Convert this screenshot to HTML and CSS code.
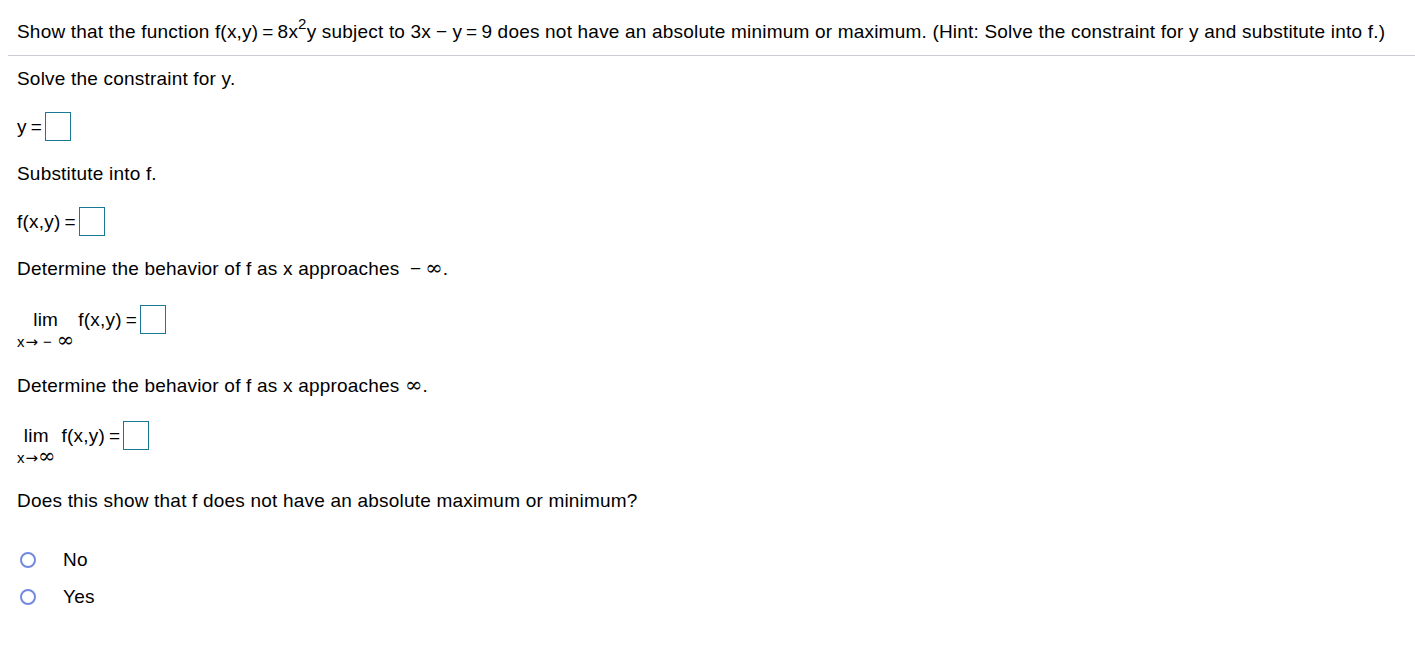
FILE: index.html
```html
<!DOCTYPE html>
<html>
<head>
<meta charset="utf-8">
<link rel="stylesheet" href="styles.css">
</head>
<body>
<div class="question">
  <p class="stem">Show that the function f(x,y)<span class="eq">=</span>8x<sup>2</sup>y subject to 3x<span class="op">−</span>y<span class="eq">=</span>9 does not have an absolute minimum or maximum. (Hint: Solve the constraint for y and substitute into f.)</p>
</div>
<div class="parts">
  <p class="line first">Solve the constraint for y.</p>
  <div class="ansrow r1"><span>y<span class="eq">=</span></span><span class="box"></span></div>
  <p class="line l2">Substitute into f.</p>
  <div class="ansrow r2"><span>f(x,y)<span class="eq">=</span></span><span class="box"></span></div>
  <p class="line l3">Determine the behavior of f as x approaches <span class="neg">−</span><span class="inf">∞</span>.</p>
  <div class="limrow r3">
    <div class="lim lim-neg"><span class="limw">lim</span><span class="under">x<span class="arr">→</span><span class="neg2">−</span><span class="inf2">∞</span></span></div>
    <span class="fx">f(x,y)<span class="eq">=</span></span><span class="box"></span>
  </div>
  <p class="line l4">Determine the behavior of f as x approaches <span class="inf">∞</span>.</p>
  <div class="limrow r4">
    <div class="lim lim-pos"><span class="limw">lim</span><span class="under">x<span class="arr">→</span><span class="inf2">∞</span></span></div>
    <span class="fx">f(x,y)<span class="eq">=</span></span><span class="box"></span>
  </div>
  <p class="line l5">Does this show that f does not have an absolute maximum or minimum?</p>
  <ul class="choices">
    <li><span class="radio"></span><span class="lbl">No</span></li>
    <li><span class="radio"></span><span class="lbl">Yes</span></li>
  </ul>
</div>
</body>
</html>
```
FILE: styles.css
```css
html, body {
  margin: 0;
  padding: 0;
  background: #fff;
}
body {
  font-family: "Liberation Sans", Arial, sans-serif;
  font-size: 19px;
  letter-spacing: 0.2px;
  color: #000;
  padding-left: 8px;
}
p { margin: 0; }
.question {
  border-bottom: 1px solid #c9ccd6;
  padding: 19px 0 10px 9px;
}
.stem { line-height: 26px; }
.stem sup {
  font-size: 15px;
  line-height: 0;
  position: relative;
  top: -2px;
  vertical-align: super;
}
.eq { margin: 0 4px; }
.op { margin: 0 5px; }
.parts { padding-left: 9px; }
.line { line-height: 22px; }
.first { margin-top: 12px; }
.ansrow {
  display: flex;
  align-items: center;
  margin-top: 22px;
}
.box {
  display: inline-block;
  width: 24px;
  height: 27px;
  border: 1px solid #1a7896;
}
.ansrow .eq, .limrow .eq { margin: 0 3px 0 4px; }
.l2 { margin-top: 22px; }
.r2 { margin-top: 22px; }
.l3 { margin-top: 22px; }
.neg { margin-left: 5px; margin-right: 4px; }
.inf { font-family: "DejaVu Serif", serif; font-size: 21px; letter-spacing: 0; line-height: 0; }
.limrow {
  display: flex;
  align-items: flex-start;
  margin-top: 25px;
  height: 50px;
}
.fx { line-height: 22px; margin-top: 4px; }
.lim {
  display: flex;
  flex-direction: column;
  align-items: center;
}
.limw { line-height: 22px; margin-top: 4px; }
.under {
  font-size: 15px;
  line-height: 16px;
  margin-top: 3px;
  letter-spacing: 0;
}
.arr { font-family: "DejaVu Sans", sans-serif; font-size: 15px; margin-left: 1px; }
.neg2 { margin: 0 5px; }
.inf2 { font-family: "DejaVu Serif", serif; font-size: 21px; line-height: 0; }
.lim-neg { margin-right: 4px; }
.lim-pos { margin-right: 6px; }
.l4 { margin-top: 20px; }
.r4 { margin-top: 24px; }
.l5 { margin-top: 19px; }
.choices {
  list-style: none;
  margin: 37px 0 0 0;
  padding: 0;
}
.choices li {
  display: flex;
  align-items: center;
  height: 22px;
  margin-bottom: 15px;
}
.radio {
  display: inline-block;
  width: 12px;
  height: 12px;
  border: 2px solid #7389e0;
  border-radius: 50%;
  margin-left: 3px;
  margin-right: 27px;
}
```
